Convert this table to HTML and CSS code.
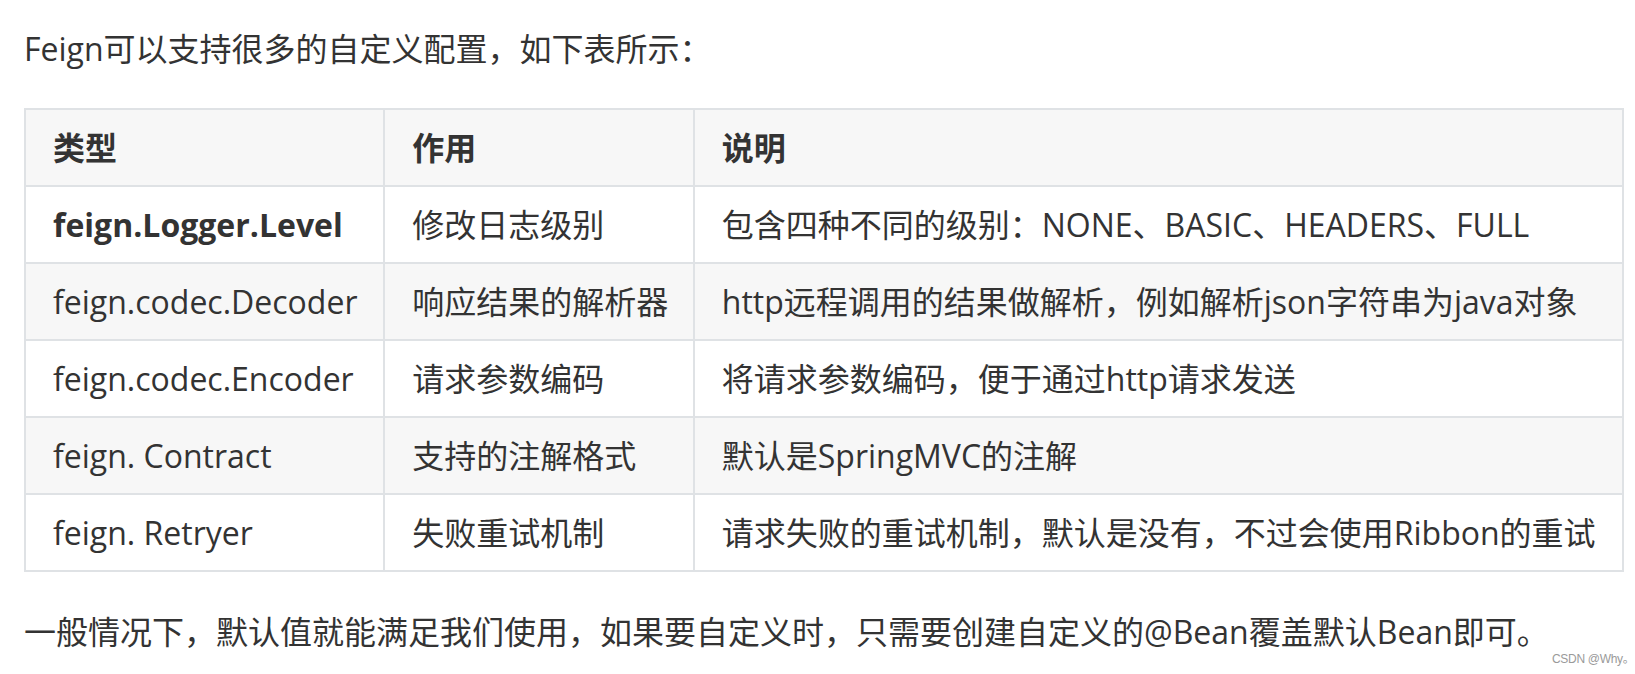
FILE: index.html
```html
<!DOCTYPE html>
<html lang="zh-CN">
<head>
<meta charset="utf-8">
<title>Feign 自定义配置</title>
<link rel="stylesheet" href="styles.css">
</head>
<body>
<div class="article">
  <p class="intro">Feign可以支持很多的自定义配置，如下表所示：</p>
  <table class="config">
    <colgroup>
      <col class="c1"><col class="c2"><col class="c3">
    </colgroup>
    <thead>
      <tr><th>类型</th><th>作用</th><th>说明</th></tr>
    </thead>
    <tbody>
      <tr><td><strong>feign.Logger.Level</strong></td><td>修改日志级别</td><td class="desc">包含四种不同的级别：NONE、BASIC、HEADERS、FULL</td></tr>
      <tr><td>feign.codec.Decoder</td><td>响应结果的解析器</td><td class="desc">http远程调用的结果做解析，例如解析json字符串为java对象</td></tr>
      <tr><td>feign.codec.Encoder</td><td>请求参数编码</td><td class="desc">将请求参数编码，便于通过http请求发送</td></tr>
      <tr><td>feign. Contract</td><td>支持的注解格式</td><td class="desc">默认是SpringMVC的注解</td></tr>
      <tr><td>feign. Retryer</td><td>失败重试机制</td><td class="desc">请求失败的重试机制，默认是没有，不过会使用Ribbon的重试</td></tr>
    </tbody>
  </table>
  <p class="outro">一般情况下，默认值就能满足我们使用，如果要自定义时，只需要创建自定义的@Bean覆盖默认Bean即可。</p>
</div>
<div class="watermark">CSDN @Why。</div>
</body>
</html>
```
FILE: styles.css
```css
html, body {
  margin: 0;
  padding: 0;
  background: #ffffff;
}
body {
  color: #333333;
  font-family: "Open Sans", "Noto Sans CJK SC", sans-serif;
  position: relative;
  height: 674px;
  overflow: hidden;
}
.article {
  padding: 25px 0 0 24px;
}
.intro {
  margin: 0;
  font-size: 32px;
  line-height: 48px;
}
.config {
  margin-top: 35px;
  border-collapse: collapse;
  width: 1600px;
  font-size: 32px;
}
.config col.c1 { width: 360px; }
.config col.c2 { width: 310px; }
.config col.c3 { width: 930px; }
.config th,
.config td {
  border: 2px solid #dfe2e5;
  text-align: left;
  padding: 14px 20px 13px 27px;
  line-height: 48px;
  white-space: nowrap;
}
.config th {
  font-weight: 700;
  background: #f7f7f7;
}
.config td strong {
  font-weight: 700;
}
.config tbody tr:nth-child(even) td {
  background: #f7f7f7;
}
.outro {
  margin: 36px 0 0;
  font-size: 32px;
  line-height: 48px;
}
.watermark {
  position: absolute;
  left: 1552px;
  top: 649px;
  font-family: "Liberation Sans", "Noto Sans CJK SC", sans-serif;
  font-size: 12px;
  color: #9a9a9a;
  letter-spacing: -0.3px;
}
```
